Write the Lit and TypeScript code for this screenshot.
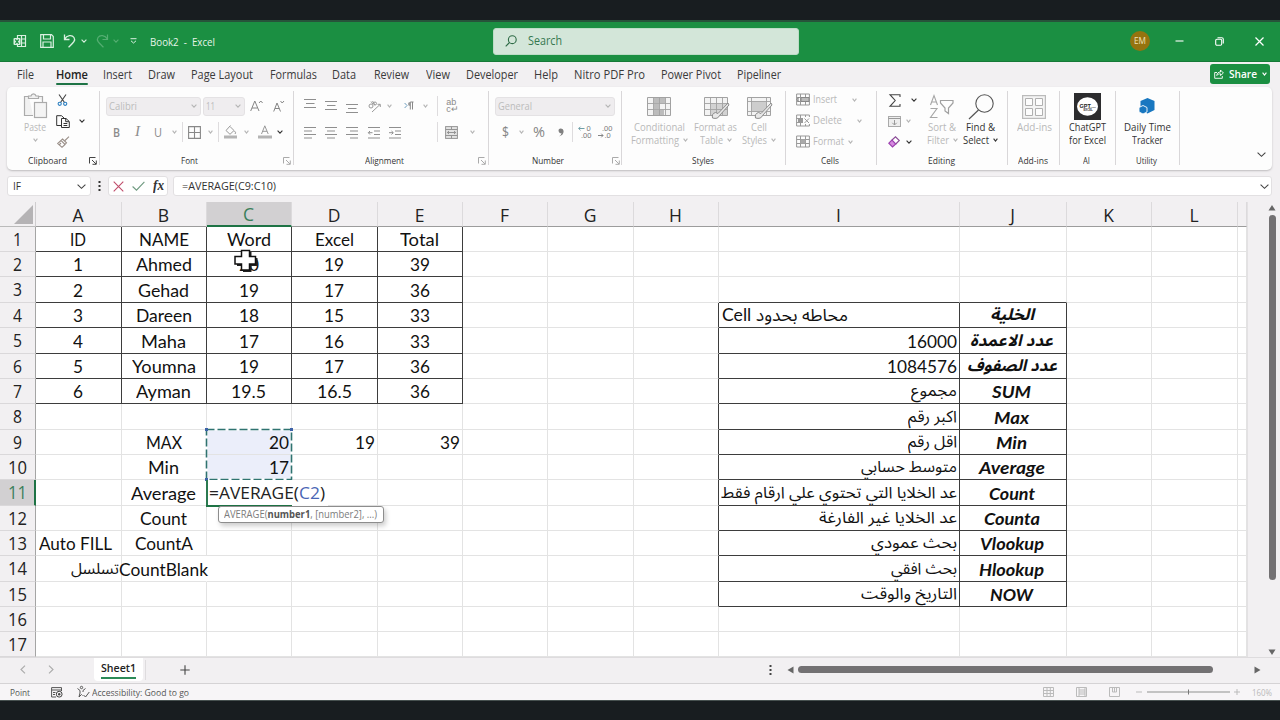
import { LitElement, html, css, svg, nothing } from "lit";
import { customElement, property } from "lit/decorators.js";
import { classMap } from "lit/directives/class-map.js";
import { styleMap } from "lit/directives/style-map.js";

/** A single line of text condensed or expanded to a given width. */
@customElement("fit-text")
class FitText extends LitElement {
  @property({ type: Number }) w = 0;
  static styles = css`
    :host { display: inline-block; white-space: pre; flex: none; overflow: visible; }
    span { display: inline-block; transform-origin: 0 50%; }
  `;
  render() {
    return html`<span><slot></slot></span>`;
  }
  updated() {
    const s = this.renderRoot.querySelector("span") as HTMLElement;
    if (!this.w) return;
    this.style.width = this.w + "px";
    s.style.transform = "none";
    const n = s.getBoundingClientRect().width;
    if (n > 0) s.style.transform = `scaleX(${this.w / n})`;
  }
}

const t = (text: string, w: number, cls = "") => html`<fit-text class=${cls} .w=${w}>${text}</fit-text>`;
const ic = (w: number, h: number, body: unknown) =>
  html`<svg class="ic" width=${w} height=${h} viewBox="0 0 ${w} ${h}" fill="none">${body}</svg>`;
const chev = (c = "#444", w = 6) =>
  ic(w, 4, svg`<path d="M.6 .6 L${w / 2} 3.1 L${w - 0.6} .6" stroke=${c} stroke-width="1.1"/>`);
const bigChev = () => ic(9, 5, svg`<path d="M.6 .6L4.500 4.300L8.400 .6" stroke="#444" stroke-width="1.100"/>`);

type Item = [number, number, unknown];
/** Horizontal run of items; each entry is [left, width, content]. */
const strip = (cls: string, start: number, items: Item[]) => {
  let cur = start;
  return html`<div class="strip ${cls}">
    ${items.map(([x, w, c]) => {
      const m = x - cur;
      cur = x + w;
      return html`<div class="it" style=${styleMap({ marginLeft: m + "px", width: w + "px" })}>${c}</div>`;
    })}
  </div>`;
};

const lines = (w: number, rows: [number, number, number][]) =>
  ic(w, 13, rows.map(([y, a, b]) => svg`<path d="M${a} ${y}H${b}" stroke="#8f8f8f"/>`));

const launcher = (c: string) =>
  ic(8, 8, svg`<path d="M.5 6.5V.5H6.5M3 3L7 7M7.3 3.5V7.3H3.5" stroke=${c}/>`);

const gridIcon = (fills: unknown, brush = false) =>
  ic(26, 24, svg`<path d="M1.500 2.500H24.500V20.500H1.500Z" fill="#f3f3f3" stroke="#a2a2a2"/>${fills}
   <path d="M1.500 8.500H24.500M1.500 14.500H24.500M7.500 2.500V20.500M13.500 2.500V20.500M19.500 2.500V20.500" stroke="#a2a2a2" stroke-width=".9"/>
   ${brush ? svg`<path d="M25 8L15 18.500L12.500 17.500Q8.500 18.500 9.500 23Q15 24.500 16.500 20.500L26 10Z" fill="#e8e8e8" stroke="#8c8c8c"/>` : nothing}`);

const COLS: [string, number][] = [
  ["A", 86], ["B", 85], ["C", 85], ["D", 86], ["E", 85], ["F", 85], ["G", 86],
  ["H", 85], ["I", 241], ["J", 107], ["K", 85], ["L", 86], ["", 9],
];
const ROWS = [25, 25, 26, 25, 26, 25, 25, 26, 25, 25, 26, 25, 25, 26, 25, 25, 25];

/** text, rendered width, alignment */
type Cell = [string, number, string];
const CELLS: Record<string, Cell> = {};
const put = (ref: string, text: string, w: number, al = "c") => (CELLS[ref] = [text, w, al]);
const heads: [string, number][] = [["ID", 16], ["NAME", 50], ["Word", 44], ["Excel", 39], ["Total", 39]];
heads.forEach(([s, w], i) => put("ABCDE"[i] + "1", s, w));
const people: [string, number, string, string, string][] = [
  ["Ahmed", 56, "20", "19", "39"], ["Gehad", 51, "19", "17", "36"], ["Dareen", 56, "18", "15", "33"],
  ["Maha", 45, "17", "16", "33"], ["Youmna", 64, "19", "17", "36"], ["Ayman", 55, "19.5", "16.5", "36"],
];
people.forEach(([n, w, a, b, c], i) => {
  const r = i + 2;
  put("A" + r, String(i + 1), 10);
  put("B" + r, n, w);
  put("C" + r, a, a.length > 2 ? 35 : 20);
  put("D" + r, b, b.length > 2 ? 35 : 20);
  put("E" + r, c, 20);
});
put("B9", "MAX", 36); put("B10", "Min", 31); put("B11", "Average", 65); put("B12", "Count", 47);
put("B13", "CountA", 58); put("B14", "CountBlank", 89);
put("C9", "20", 20, "r"); put("D9", "19", 20, "r"); put("E9", "39", 20, "r"); put("C10", "17", 20, "r");
put("A13", "Auto FILL", 73, "l"); put("A14", "تسلسل", 48, "r ar");
put("I4", "Cell محاطه بحدود", 126, "l mix");
put("I5", "16000", 50, "r"); put("I6", "1084576", 70, "r");
const arab: [string, number][] = [
  ["مجموع", 46], ["اكبر رقم", 49], ["اقل رقم", 49], ["متوسط حسابي", 96], ["عد الخلايا التي تحتوي علي ارقام فقط", 236],
  ["عد الخلايا غير الفارغة", 138], ["بحث عمودي", 86], ["بحث افقي", 66], ["التاريخ والوقت", 96],
];
arab.forEach(([s, w], i) => put("I" + (7 + i), s, w, "r ar"));
const names: [string, number, string][] = [
  ["الخلية", 44, "ar"], ["عدد الاعمدة", 83, "ar"], ["عدد الصفوف", 90, "ar"], ["SUM", 39, ""], ["Max", 35, ""], ["Min", 31, ""],
  ["Average", 66, ""], ["Count", 46, ""], ["Counta", 56, ""], ["Vlookup", 64, ""], ["Hlookup", 65, ""], ["NOW", 43, ""],
];
names.forEach(([s, w, k], i) => put("J" + (4 + i), s, w, "c bi " + k));

const inBox = (c: number, r: number) =>
  (c >= 0 && c <= 4 && r >= 0 && r <= 6) || (c >= 8 && c <= 9 && r >= 3 && r <= 14);

@customElement("app-root")
class AppRoot extends LitElement {
  static styles = css`
    :host { display: flex; flex-direction: column; width: 1280px; height: 720px; overflow: hidden; background: #f2f0f2;
      font-family: "Open Sans", "Noto Sans", sans-serif; font-size: 12px; color: #333; line-height: 1; }
    * { box-sizing: border-box; }
    .ic { display: block; flex: none; overflow: visible; }
    .ic text { font-family: "Liberation Sans", sans-serif; }
    .strip { display: flex; align-items: center; flex: none; }
    .it { display: flex; align-items: center; justify-content: center; flex: none; }
    .dark { height: 22px; background: #181d20; border-bottom: 2px solid #27533a; flex: none; }
    .title { height: 40px; background: #1b8f42; color: #e6f4ea; border-bottom: 1px solid #167a38; padding-bottom: 1px; }
    .ttl { font-size: 11px; }
    .search { display: flex; align-items: center; width: 306px; height: 27px; background: #d3e6d9; border: 1px solid #bcdcc6;
      border-radius: 3px; padding-left: 11px; gap: 11px; color: #35784f; font-size: 12px; }
    .em { width: 20px; height: 20px; border-radius: 50%; background: #95730f; color: #f0e2b6; font-size: 9.5px;
      display: flex; align-items: center; justify-content: center; }
    .tabs { height: 25px; align-items: flex-start; color: #3a3a3a; }
    .tab { display: flex; flex-direction: column; gap: 2px; padding-top: 7px; }
    .tab.on { font-weight: 600; color: #222; }
    .tab i { display: block; height: 2px; background: #1e7345; border-radius: 1px; }
    .share { display: flex; align-items: center; justify-content: center; gap: 5px; width: 60px; height: 20px; margin-top: 2px; padding-bottom: 1px;
      background: #1b8f42; border-radius: 3px; color: #fff; font-weight: 600; font-size: 11px; }
    .ribbon { display: flex; height: 83px; margin: 0 8px 0 7px; background: #fdfdfd; border-radius: 5px;
      box-shadow: 0 1px 2px #bdbbbd; flex: none; }
    .group { display: flex; flex-direction: column; flex: none; position: relative; padding-bottom: 3px; }
    .group::after { content: ""; position: absolute; right: 0; top: 4px; bottom: 5px; width: 1px; background: #d9d7d9; }
    .body { display: flex; height: 66px; flex: none; }
    .cap { height: 16px; font-size: 9.7px; color: #333; }
    .rows2 { display: flex; flex-direction: column; padding-top: 6px; }
    .rows2 .strip { height: 26px; }
    .rows3 { display: flex; flex-direction: column; padding-top: 2px; }
    .rows3 .strip { height: 21px; }
    .big { display: flex; flex-direction: column; align-items: center; flex: none; font-size: 10.3px; color: #333; padding-bottom: 1px; }
    .big .pic { height: 28px; display: flex; align-items: center; justify-content: center; }
    .big .l { height: 13px; display: flex; align-items: center; gap: 4px; }
    .big.dis, .dis { color: #b9b9b9; }
    .combo { display: flex; align-items: center; justify-content: space-between; height: 19px; width: 100%; background: #efedef;
      border: 1px solid #e4e2e4; border-radius: 3px; padding: 0 3px 0 2px; color: #bcbcbc; font-size: 10px; }
    .vr { width: 1px; height: 20px; background: #dedcde; }
    .gl { font-size: 13px; color: #8c8c8c; }
    .money { font-size: 14px; color: #858585; }
    .b { font-weight: 600; }
    .i { font-style: italic; font-family: "Liberation Serif", serif; font-size: 14px; }
    .u { text-decoration: underline; text-underline-offset: 2px; }
    .tiny { display: flex; flex-direction: column; font: 9px/7px "Liberation Sans", sans-serif; color: #8a8a8a; }
    .small { font-size: 10.3px; color: #b9b9b9; }
    .fbar { height: 32px; }
    .box { height: 20px; width: 100%; background: #fff; border: 1px solid #e2e0e2; border-radius: 3px; display: flex; align-items: center;
      font-size: 10.5px; color: #333; padding: 0 4px 0 5px; justify-content: space-between; }
    .box.tools { padding: 0 3px 0 4px; }
    .box.inp { padding: 0 2px 0 8px; }
    .fx { font: italic bold 14px "Liberation Serif", serif; color: #333; }
    .exp { padding: 69px 0 0; display: flex; }
    .sheet { display: flex; height: 455px; flex: none; }
    .grid { display: grid; position: relative; width: 1247px; background: #fff; align-content: start; flex: none; overflow: hidden; }
    .h { display: flex; align-items: center; justify-content: center; background: #f2f0f2; font-size: 17.5px; color: #222; }
    .hc { border-right: 1px solid #dcdadc; border-bottom: 1px solid #9c9c9c; padding: 3px 1px 0 0; }
    .hc.on { background: #d2d0d2; color: #3a7f5b; border-bottom: 2px solid #1e7345; }
    .hr { border-right: 1px solid #a5a5a5; border-bottom: 1px solid #dad8da; padding-top: 1px; }
    .hr.on { background: #d2d0d2; color: #3a7f5b; border-right: 2px solid #1e7345; }
    .corner { justify-content: flex-end; align-items: flex-end; padding: 0 2px 2px 0; border-right: 1px solid #cfcdcf; border-bottom: 1px solid #bbb; }
    .c { display: flex; align-items: center; justify-content: center; border-right: 1px solid #e3e3e3; border-bottom: 1px solid #e3e3e3;
      font-family: Lato, sans-serif; font-size: 17.4px; color: #111; min-width: 0; overflow: visible; white-space: nowrap; padding: 2px 1px 0 0; }
    .c.r { justify-content: flex-end; padding-right: 2px; }
    .c.l { justify-content: flex-start; padding-left: 3px; }
    .c.ar { font-family: "Noto Sans Arabic", "Segoe UI", "DejaVu Sans", sans-serif; font-size: 16px; padding-top: 0; }
    .c.mix { font-family: Lato, "Noto Sans Arabic", "DejaVu Sans", sans-serif; padding-top: 0; }
    .c.bi { font-weight: 700; font-style: italic; padding-right: 3px; }
    .c.nr { border-right-color: transparent; }
    .c.kr { border-right-color: #3d3d3d; }
    .c.kb { border-bottom-color: #3d3d3d; }
    .c.sel { background: #ebeefa; }
    .over { position: absolute; }
    .marq { left: 205px; top: 226px; }
    .edit { left: 206px; top: 278px; width: 122px; height: 26px; background: #fff; border-left: 2px solid #2b7a50;
      display: flex; align-items: center; padding: 0 0 2px 1px; color: #222; font: 17px/1 "Open Sans", sans-serif; }
    .edit b { font-weight: 400; color: #4a66b5; }
    .eline { left: 206px; top: 303px; width: 86px; height: 2px; background: #1e7345; }
    .tip { left: 218px; top: 304px; width: 166px; height: 17px; background: #fff; border: 1px solid #8d8d8d; border-radius: 3px;
      box-shadow: 2px 3px 5px #0003; display: flex; align-items: center; padding: 0 0 1px 5px; font-size: 10px; color: #7c7c7c; }
    .tip b { color: #555; }
    .cursor { left: 233px; top: 46px; }
    .vs { flex: 1; display: flex; flex-direction: column; align-items: center; padding: 3px 0 0 16px; border-left: 1px solid #e3e1e3; }
    .vthumb { width: 7px; height: 365px; margin: 3px 0 69px; border-radius: 4px; background: #737173; }
    .foot { height: 26px; border-top: 1px solid #dedcde; padding-bottom: 2px; }
    .stab { width: 49px; height: 23px; background: #fff; border-radius: 0 0 4px 4px; display: flex; flex-direction: column; align-items: center;
      padding-top: 4px; gap: 3px; font-weight: 600; font-size: 11.5px; color: #222; }
    .stab i { width: 35px; height: 2px; background: #2b8a57; }
    .hthumb { height: 7px; width: 100%; border-radius: 4px; background: #737173; }
    .status { height: 17px; border-top: 1px solid #d5d3d5; background: #f7f5f7; font-size: 9px; color: #555; }
    .end { flex: 1; background: #181d20; border-top: 1px solid #46504f; }
  `;

  private head() {
    const w = "#d9f0e0";
    return strip("title", 0, [
      [13, 14, ic(14, 14, svg`<path d="M4.500 4V1.500H12.500V12.500H4.500V11M8.500 1.500V12.500M8.500 5H12.500M8.500 9H12.500" stroke=${w} stroke-width="1.200"/><rect x=".5" y="4" width="7" height="7" rx="1" fill=${w}/><path d="M2.300 5.500L5.700 9.700M5.700 5.500L2.300 9.700" stroke="#1b8f42" stroke-width="1.200"/>`)],
      [40, 14, ic(14, 14, svg`<path d="M.7 .7H11.500L13.300 2.500V13.300H.7ZM3.500 .7V5H10.500V.7M3 13.300V8H11V13.300" stroke=${w} stroke-width="1.200"/>`)],
      [63, 13, ic(13, 14, svg`<path d="M1.500 .5V5.500H6.500M1.500 5.300C4 1 9 .5 11 3.500C13 6.500 10 9 5.500 13.300" stroke=${w} stroke-width="1.300"/>`)],
      [81, 6, chev(w, 6)],
      [96, 13, ic(13, 14, svg`<path d="M11.500 .5V5.500H6.500M11.500 5.300C9 1 4 .5 2 3.500C0 6.500 3 9 7.500 13.300" stroke="#55ae72" stroke-width="1.200"/>`)],
      [113, 6, chev("#55ae72", 6)],
      [130, 7, ic(7, 6, svg`<path d="M.5 .7H6.500M1 2.800L3.500 5L6 2.800" stroke=${w}/>`)],
      [150, 65, t("Book2  -  Excel", 65, "ttl")],
      [493, 306, html`<div class="search">${ic(12, 12, svg`<circle cx="7.300" cy="4.700" r="3.900" stroke="#2d6a45" stroke-width="1.100"/><path d="M4.500 7.500L.7 11.300" stroke="#2d6a45" stroke-width="1.100"/>`)}${t("Search", 34)}</div>`],
      [1130, 20, html`<div class="em">${t("EM", 12)}</div>`],
      [1175, 9, ic(9, 9, svg`<path d="M.5 4H8.500" stroke="#fff" stroke-width="1.100"/>`)],
      [1215, 9, ic(9, 9, svg`<rect x=".7" y="2.200" width="6" height="6" rx="1.200" stroke="#fff" stroke-width="1.100"/><path d="M2.500 .7H6.800Q8.300 .7 8.300 2.200V6.500" stroke="#fff" stroke-width="1.100"/>`)],
      [1255, 9, ic(9, 9, svg`<path d="M.5 .5L8.500 8.500M8.500 .5L.5 8.500" stroke="#fff" stroke-width="1.200"/>`)],
    ]);
  }

  private tabs() {
    const T: [string, number, number][] = [
      ["File", 17, 17], ["Home", 56, 32], ["Insert", 103, 29], ["Draw", 148, 27], ["Page Layout", 191, 62], ["Formulas", 270, 47],
      ["Data", 332, 24], ["Review", 374, 35], ["View", 426, 24], ["Developer", 466, 52], ["Help", 534, 24],
      ["Nitro PDF Pro", 574, 71], ["Power Pivot", 661, 60], ["Pipeliner", 737, 44],
    ];
    return strip("tabs", 0, [
      ...T.map(([s, x, w]): Item => [x, w, html`<div class="tab ${s === "Home" ? "on" : ""}">${t(s, w)}${s === "Home" ? html`<i></i>` : nothing}</div>`]),
      [1210, 60, html`<div class="share">${ic(10, 10, svg`<path d="M3 3.500H.7V9.300H8.300V7M2.800 6.500C3 4 4.500 3 6.500 3V1L9.400 4L6.500 6.500V4.800C5 4.800 3.800 5.200 2.800 6.500Z" stroke="#fff" stroke-width=".9"/>`)}${t("Share", 28)}${chev("#fff", 5)}</div>`],
    ]);
  }

  private group(x0: number, x1: number, body: unknown, cap: [string, number, number], launch = 0, lc = "#aaa") {
    const items: Item[] = [[cap[1], cap[2], t(cap[0], cap[2])]];
    if (launch) items.push([launch, 8, launcher(lc)]);
    return html`<div class="group" style=${styleMap({ width: x1 - x0 + "px" })}>
      <div class="body">${body}</div>${strip("cap", x0, items)}</div>`;
  }

  private big(cls: string, pic: unknown, l1: unknown, l2: unknown) {
    return html`<div class="big ${cls}"><div class="pic">${pic}</div><div class="l">${l1}</div><div class="l">${l2}</div></div>`;
  }

  private ribbon() {
    const d = "#333";
    const lt = "#b5b5b5";
    const clip = strip("", 7, [
      [22, 26, this.big("dis", ic(26, 28, svg`<path d="M7 3.500H2.500V22.500H11M16 3.500H20.500V9M6.500 5.500V3H9Q9.500 .8 11.500 .8Q13.500 .8 14 3H16.500V5.500Z" fill="#f1f1f1" stroke="#ababab" stroke-width="1.200"/><rect x="12.500" y="9.500" width="12" height="15" fill="#f4f4f4" stroke="#ababab" stroke-width="1.200"/>`), t("Paste", 22), chev(lt, 5))],
      [55, 30, html`<div class="rows3">
        ${strip("", 55, [[57, 11, ic(11, 12, svg`<path d="M2 .5L7.500 8.500M9 .5L3.500 8.500" stroke="#444" stroke-width="1.100"/><circle cx="2.700" cy="9.800" r="1.600" stroke="#2b7fc0" stroke-width="1.100"/><circle cx="8.200" cy="9.800" r="1.600" stroke="#2b7fc0" stroke-width="1.100"/>`)]])}
        ${strip("", 55, [[56, 14, ic(14, 13, svg`<path d="M5 10.500H.7V.7H5.500L8 3" stroke=${d}/><path d="M5.500 3.500H10L13.300 6.500V12.500H5.500ZM9.700 3.500V6.700H13M7.500 8.500H11.300M7.500 10.500H11.300" stroke=${d}/>`)], [79, 6, chev(d, 6)]])}
        ${strip("", 55, [[57, 13, ic(13, 12, svg`<path d="M12 .7L8 4.500M5.500 3L9.500 6.800L8 8.500L4 4.500ZM4 4.500L.7 7.500L5 11.300L8 8.500M2.500 8.500L4 7" stroke="#9a8f88" stroke-width="1.100"/>`)]])}
      </div>`],
    ]);
    const font = html`<div class="rows2">
      ${strip("", 100, [
        [106, 95, html`<div class="combo">${t("Calibri", 28)}${chev(lt, 6)}</div>`],
        [203, 42, html`<div class="combo">${t("11", 9)}${chev(lt, 6)}</div>`],
        [250, 13, ic(13, 13, svg`<path d="M.7 11L4.800 1L9 11M2 8H7.500M9 3L10.800 1L12.600 3" stroke="#858585"/>`)],
        [273, 12, ic(12, 13, svg`<path d="M.7 11.500L4 3L7.500 11.500M2 8.500H6.300M7.500 1L9.200 3L11 1" stroke="#858585"/>`)],
      ])}
      ${strip("", 100, [
        [111, 10, t("B", 7, "gl b")], [132, 10, t("I", 5, "gl i")], [153, 10, t("U", 8, "gl u")], [171, 6, chev(lt, 5)],
        [182, 1, html`<div class="vr"></div>`],
        [188, 13, ic(13, 13, svg`<path d="M.6 .6H12.400V12.400H.6ZM6.500 .6V12.400M.6 6.500H12.400" stroke="#888" stroke-width="1.100"/>`)], [207, 6, chev(lt, 5)],
        [218, 1, html`<div class="vr"></div>`],
        [224, 13, ic(13, 14, svg`<path d="M6 1.500L10 5.500L6 9.300L2 5.500L6.500 .5M10.500 6Q12.500 8 11 9" stroke="#999"/><rect x="0" y="10.500" width="13" height="3" fill="#b4b4b4"/>`)], [243, 6, chev(lt, 5)],
        [258, 14, ic(14, 14, svg`<path d="M3.500 9L6.800 .8L10.200 9M4.700 6.300H9" stroke="#999"/><rect x="0" y="10.500" width="14" height="3" fill="#b4b4b4"/>`)], [277, 6, chev(d, 6)],
      ])}</div>`;
    const a3 = (o: number): unknown => lines(13, [[2.5 + o, 0, 12], [6.5 + o, 2, 10.5], [10.5 + o, 0, 12]]);
    const indent = (r: boolean) => ic(13, 13, svg`<path d="M0 1.500H12M6 5H12M6 8.500H12M0 12H12" stroke="#8f8f8f"/><path d=${r ? "M0 6.700H4M2.500 5L4.300 6.700L2.500 8.500" : "M4.500 6.700H.5M2 5L.3 6.700L2 8.500"} stroke="#8f8f8f"/>`);
    const align = html`<div class="rows2">
      ${strip("", 294, [
        [304, 13, a3(-3)], [325, 13, a3(-1)], [346, 13, a3(2)],
        [368, 14, ic(14, 13, svg`<circle cx="3" cy="6" r="2" stroke="#999"/><path d="M5 4L3 1.500M7 5L4.500 1M4 12L12 4.500M9.500 4.300H12.300V7" stroke="#999"/><circle cx="7" cy="3.500" r="1.500" stroke="#999"/>`)], [386, 6, chev(lt, 5)],
        [404, 10, ic(10, 10, svg`<path d="M.6 2L3 4.500L.6 7" stroke="#6f9fc0"/><path d="M6.300 8.500V1H9.500M8.500 1V8.500" stroke="#888"/><path d="M6.300 1Q4 1 4 3Q4 5 6.300 5Z" fill="#999"/>`)], [422, 6, chev(lt, 5)],
        [437, 1, html`<div class="vr"></div>`],
        [446, 13, html`<div class="tiny"><span>ab</span><span>c↵</span></div>`],
      ])}
      ${strip("", 294, [
        [304, 13, lines(13, [[1.5, 0, 12], [5, 0, 8], [8.5, 0, 12], [12, 0, 8]])],
        [325, 13, lines(13, [[1.5, 0, 12], [5, 2, 10], [8.5, 0, 12], [12, 2, 10]])],
        [346, 13, lines(13, [[1.5, 0, 12], [5, 4, 12], [8.5, 0, 12], [12, 4, 12]])],
        [368, 13, indent(false)], [389, 13, indent(true)],
        [437, 1, html`<div class="vr"></div>`],
        [445, 13, ic(13, 13, svg`<rect x=".6" y=".6" width="11.800" height="11.800" fill="#e4e4e4" stroke="#959595"/><path d="M.6 3.500H12.400M.6 9.500H12.400M6.500 .6V3.500M6.500 9.500V12.400M2 6.500H11M4 5L2.300 6.500L4 8M9 5L10.700 6.500L9 8" stroke="#959595"/>`)], [469, 6, chev(lt, 5)],
      ])}</div>`;
    const dec = (l: string, b: string, r: boolean) => ic(14, 14, svg`<text x=${r ? 4 : 8.5} y="6" font-size="7.5" fill="#777">${l}</text><text x=${r ? 6.500 : 3} y="13" font-size="7.5" fill="#777">${b}</text>${r ? svg`<path d="M0 10.500H5M3.300 8.700L5 10.500L3.300 12.300" stroke="#858585"/>` : svg`<path d="M6.500 3.500H.7M2.500 1.700L.7 3.500L2.500 5.300" stroke="#6f9fa8"/>`}`);
    const num = html`<div class="rows2">
      ${strip("", 489, [[495, 120, html`<div class="combo">${t("General", 34)}${chev(lt, 6)}</div>`]])}
      ${strip("", 489, [
        [500, 10, t("$", 7, "money")], [518, 6, chev(lt, 5)], [532, 14, t("%", 12, "money")],
        [557, 8, ic(6, 9, svg`<path d="M3 .5A2.300 2.300 0 1 0 3.500 5Q3.300 7 1 8.500Q5.800 7 5.600 3Q5.400 .6 3 .5Z" fill="#808080"/>`)],
        [572, 1, html`<div class="vr"></div>`], [578, 14, dec("0", ".00", false)], [598, 14, dec(".00", ".0", true)],
      ])}</div>`;
    const fill = svg`<path d="M8 3H19V8H8ZM8 9H13V14H8ZM8 15H18V20H8Z" fill="#bcbcbc"/>`;
    const styles = strip("", 622, [
      [631, 56, this.big("dis", gridIcon(fill), t("Conditional", 51), html`${t("Formatting", 48)}${chev(lt, 5)}`)],
      [694, 43, this.big("dis", gridIcon(svg`<path d="M8 9H24V20H8Z" fill="#d2d2d2"/>`, true), t("Format as", 43), html`${t("Table", 23)}${chev(lt, 5)}`)],
      [742, 34, this.big("dis", ic(26, 24, svg`<path d="M1.500 2.500H24.500V20.500H1.500Z" fill="#f3f3f3" stroke="#a2a2a2"/><path d="M5.500 6.500H20.500V16.500H5.500Z" fill="#cdcdcd"/><path d="M1.500 6.500H24.500M1.500 16.500H24.500M5.500 2.500V20.500M20.500 2.500V20.500" stroke="#a2a2a2" stroke-width=".9"/><path d="M25 8L15 18.500L12.500 17.500Q8.500 18.500 9.500 23Q15 24.500 16.500 20.500L26 10Z" fill="#e8e8e8" stroke="#8c8c8c"/>`), t("Cell", 16), html`${t("Styles", 25)}${chev(lt, 5)}`)],
    ]);
    const cellIc = (k: number) => ic(14, 13, svg`<path d="M.6 1H13.400V12H.6ZM.6 4.500H13.400M.6 8.500H13.400M4.500 1V12M9.500 1V12" stroke="#999"/>${k === 0 ? svg`<path d="M5 4.500H13V8.500H5ZM3 4L.8 6.500L3 9" fill="#bbb" stroke="#888"/>` : k === 1 ? svg`<path d="M2 4.500H7V9H2Z" fill="#999"/><path d="M7 3H14V10H7Z" fill="#fdfdfd"/><path d="M8.500 4.500L13 9M13 4.500L8.500 9" stroke="#999"/>` : svg`<path d="M4.500 4.500H9.500V8.500H4.500Z" fill="#aaa"/>`}`);
    const cells = html`<div class="rows3">
      ${strip("", 786, [[796, 14, cellIc(0)], [813, 24, t("Insert", 24, "small")], [851, 6, chev(lt, 5)]])}
      ${strip("", 786, [[796, 14, cellIc(1)], [813, 29, t("Delete", 29, "small")], [856, 6, chev(lt, 5)]])}
      ${strip("", 786, [[796, 14, cellIc(2)], [813, 31, t("Format", 31, "small")], [847, 6, chev(lt, 5)]])}
    </div>`;
    const edit = strip("", 877, [
      [887, 30, html`<div class="rows3">
        ${strip("", 887, [[888, 12, ic(12, 13, svg`<path d="M11 3V.7H1L6.200 6.500L1 12.300H11V10" stroke="#444" stroke-width="1.100"/>`)], [910, 6, chev(d, 6)]])}
        ${strip("", 887, [[887, 13, ic(13, 11, svg`<rect x=".5" y=".5" width="12" height="10" fill="#eee" stroke="#aaa"/><path d="M.5 2.500H12.500M6.500 4V9M4.300 6.800L6.500 9L8.700 6.800" stroke="#999"/>`)], [905, 6, chev(lt, 5)]])}
        ${strip("", 887, [[887, 12, ic(12, 12, svg`<path d="M4 4L7.500 .8L11.300 4.500L7.800 8" stroke="#8a4a96" stroke-width="1.100"/><path d="M4 4L.8 7.200L4.500 11L7.800 8Z" fill="#d68ae0" stroke="#9a3fae" stroke-width="1.100"/>`)], [905, 6, chev(d, 6)]])}
      </div>`],
      [926, 32, this.big("dis", ic(26, 26, svg`<path d="M1.500 11L5 1.500L8.500 11M2.700 8H7.300M1.500 14.500H8L1.500 23.500H8.500" stroke="#a6a6a6" stroke-width="1.100"/><path d="M11.500 6.500H24V9L19.500 14V19.500L16 17V14L11.500 9Z" stroke="#a0a0a0" stroke-width="1.200"/>`), t("Sort &", 28), html`${t("Filter", 22)}${chev(lt, 5)}`)],
      [963, 35, this.big("", ic(26, 26, svg`<circle cx="16.500" cy="9.500" r="8.700" stroke="#555" stroke-width="1.100"/><path d="M10.500 16L1 25" stroke="#555" stroke-width="1.200"/>`), t("Find &", 29), html`${t("Select", 26)}${chev(d, 5)}`)],
    ]);
    const addins = strip("", 1008, [[1016, 36, this.big("dis", ic(24, 24, svg`<rect x=".6" y=".6" width="22.800" height="22.800" stroke="#bbb" stroke-width="1.200" fill="#f4f4f4"/><path d="M3.500 3.500H10.500V10.500H3.500ZM13.500 3.500H20.500V10.500H13.500ZM3.500 13.500H10.500V20.500H3.500ZM13.500 13.500H20.500V20.500H13.500Z" stroke="#b0b0b0" fill="#fdfdfd"/>`), t("Add-ins", 35), nothing)]]);
    const ai = strip("", 1060, [[1068, 38, this.big("", ic(27, 27, svg`<rect width="27" height="27" fill="#2c2c2e"/><ellipse cx="13.500" cy="13.500" rx="10.500" ry="9.300" fill="#fff"/><text x="5.500" y="14.500" font-size="5.500" font-weight="700" fill="#222">GPT</text><text x="16.500" y="14.500" font-size="2.500" fill="#222">FOR</text><text x="9.500" y="18" font-size="2.800" font-weight="700" fill="#333">EXCEL</text>`), t("ChatGPT", 37), t("for Excel", 37))]]);
    const util = strip("", 1116, [[1123, 48, this.big("", ic(18, 18, svg`<path d="M9.500 0L16.500 3V12L9.500 15.500L2.500 12V3Z" fill="#1877c0"/><path d="M5 7.500L9 9.500V14L5 16L1 14V9.500Z" fill="#1877c0" stroke="#fdfdfd" stroke-width=".9"/>`), t("Daily Time", 47), t("Tracker", 31))]]);
    return html`<div class="ribbon">
      ${this.group(7, 100, clip, ["Clipboard", 28, 39], 89, "#444")}
      ${this.group(100, 294, font, ["Font", 181, 17], 283)}
      ${this.group(294, 489, align, ["Alignment", 365, 39], 478)}
      ${this.group(489, 622, num, ["Number", 532, 32], 612)}
      ${this.group(622, 786, styles, ["Styles", 692, 22])}
      ${this.group(786, 877, cells, ["Cells", 821, 18])}
      ${this.group(877, 1008, edit, ["Editing", 928, 27])}
      ${this.group(1008, 1060, addins, ["Add-ins", 1018, 30])}
      ${this.group(1060, 1116, ai, ["AI", 1083, 7])}
      ${this.group(1116, 1180, util, ["Utility", 1136, 21])}
      <div class="body">${strip("", 1180, [[1257, 9, html`<div class="exp">${bigChev()}</div>`]])}</div>
    </div>`;
  }

  private fbar() {
    return strip("fbar", 0, [
      [7, 84, html`<div class="box">${t("IF", 8)}${bigChev()}</div>`],
      [98, 3, ic(3, 10, svg`<path d="M.5 0H2.500V2H.5ZM.5 4H2.500V6H.5ZM.5 8H2.500V10H.5Z" fill="#333"/>`)],
      [108, 60, html`<div class="box tools">${ic(11, 11, svg`<path d="M.7 .7L10.300 10.300M10.300 .7L.7 10.300" stroke="#c04d6b" stroke-width="1.100"/>`)}${ic(13, 10, svg`<path d="M.6 5.500L4.500 9.200L12.400 .8" stroke="#6f9a80" stroke-width="1.100"/>`)}${t("fx", 11, "fx")}</div>`],
      [173, 1099, html`<div class="box inp">${t("=AVERAGE(C9:C10)", 94)}${bigChev()}</div>`],
    ]);
  }

  private sheet() {
    const cells: unknown[] = [];
    ROWS.forEach((_, r) => {
      cells.push(html`<div class=${classMap({ h: true, hr: true, on: r === 10 })}>${t(String(r + 1), r > 8 ? 19 : 9)}</div>`);
      COLS.forEach(([name], c) => {
        const v = CELLS[name + (r + 1)];
        const cls: Record<string, boolean> = {
          c: true,
          kr: inBox(c, r) || inBox(c + 1, r),
          kb: inBox(c, r) || inBox(c, r + 1),
          sel: c === 2 && (r === 8 || r === 9),
          nr: c === 1 && r === 13,
        };
        if (v) v[2].split(" ").filter((k) => k && k !== "c").forEach((k) => (cls[k] = true));
        cells.push(html`<div class=${classMap(cls)}>${v ? t(v[0], v[1]) : nothing}</div>`);
      });
    });
    const tpl = styleMap({
      gridTemplateColumns: "36px " + COLS.map(([, w]) => w + "px").join(" "),
      gridTemplateRows: "25px " + ROWS.map((h) => h + "px").join(" "),
    });
    return html`<div class="sheet">
      <div class="grid" style=${tpl}>
        <div class="h corner">${ic(20, 19, svg`<path d="M20 0V19H1Z" fill="#b5b3b5"/>`)}</div>
        ${COLS.map(([n]) => html`<div class=${classMap({ h: true, hc: true, on: n === "C" })}>${n ? t(n, 0) : nothing}</div>`)}
        ${cells}
        <div class="over marq">${ic(88, 54, svg`<path d="M1.500 1.500H86.500V51.500H1.500Z" stroke="#fff" stroke-width="2"/><path d="M1.500 1.500H86.500V51.500H1.500Z" stroke="#2f7370" stroke-width="1.600" stroke-dasharray="8 3"/><path d="M0 0H3V3H0ZM85 0H88V3H85ZM0 50H3V53H0Z" fill="#3d62a8"/>`)}</div>
        <div class="over edit"><fit-text .w=${116}>=AVERAGE(<b>C2</b>)</fit-text></div>
        <div class="over eline"></div>
        <div class="over tip"><fit-text .w=${153}>AVERAGE(<b>number1</b>, [number2], ...)</fit-text></div>
        <div class="over cursor">${ic(26, 25, svg`<path d="M10 4H18.500V10H24.500V18H18.500V24H10V18H4V10H10Z" fill="#222"/><path d="M8.500 2.500H16.500V8.500H22.500V16H16.500V22H8.500V16H2V8.500H8.500Z" fill="#fff" stroke="#111" stroke-width="1.500"/>`)}</div>
      </div>
      <div class="vs">
        ${ic(8, 7, svg`<path d="M4 0L7.500 5.500H.5Z" fill="#666"/>`)}<div class="vthumb"></div>
        ${ic(8, 7, svg`<path d="M4 6L7.500 .5H.5Z" fill="#666"/>`)}
      </div>
    </div>`;
  }

  private foot() {
    return strip("foot", 0, [
      [20, 6, ic(6, 9, svg`<path d="M5 .7L1 4.500L5 8.300" stroke="#aaa" stroke-width="1.100"/>`)],
      [48, 6, ic(6, 9, svg`<path d="M1 .7L5 4.500L1 8.300" stroke="#aaa" stroke-width="1.100"/>`)],
      [94, 49, html`<div class="stab">${t("Sheet1", 35)}<i></i></div>`],
      [145, 1, html`<div class="vr"></div>`],
      [180, 10, ic(10, 10, svg`<path d="M5 .3V9.700M.3 5H9.700" stroke="#444" stroke-width="1.100"/>`)],
      [769, 3, ic(3, 10, svg`<path d="M.5 0H2.500V2H.5ZM.5 4H2.500V6H.5ZM.5 8H2.500V10H.5Z" fill="#444"/>`)],
      [787, 7, ic(7, 8, svg`<path d="M.5 4L6.500 .5V7.500Z" fill="#666"/>`)],
      [798, 415, html`<div class="hthumb"></div>`],
      [1254, 7, ic(7, 8, svg`<path d="M6.500 4L.5 .5V7.500Z" fill="#666"/>`)],
    ]);
  }

  private status() {
    const g = "#bbb";
    return strip("status", 0, [
      [10, 20, t("Point", 20)],
      [51, 12, ic(12, 11, svg`<path d="M5 10H.6V.6H10.500V4M.6 3H10.500M2 5.500H4.500M2 7.500H4" stroke="#555"/><circle cx="8.200" cy="7.200" r="2.900" stroke="#444"/><circle cx="8.200" cy="7.200" r="1.200" fill="#444"/>`)],
      [77, 13, ic(13, 12, svg`<circle cx="4.500" cy="1.500" r="1.200" stroke="#555"/><path d="M.5 2.500L3 4.500V7L2 11L4.500 8.500L5.500 9.500M8.500 2.500L6 4.500V6M6.500 9L8.500 11L12.300 6" stroke="#555"/>`)],
      [92, 97, t("Accessibility: Good to go", 97)],
      [1042, 12, ic(11, 10, svg`<path d="M.5 .5H10.500V9.500H.5ZM.5 3.500H10.500M.5 6.500H10.500M4 .5V9.500M7.300 .5V9.500" stroke=${g}/>`)],
      [1075, 12, ic(11, 10, svg`<path d="M.5 .5H10.500V9.500H.5ZM3 .5V9.500M9 .5V9.500M3 3H9M3 5H9M3 7H9" stroke=${g}/>`)],
      [1108, 12, ic(11, 10, svg`<path d="M.5 .5H10.500V9.500H.5ZM3.500 .5V5H7.500V.5M5.500 .5V5" stroke=${g}/>`)],
      [1136, 6, ic(6, 6, svg`<path d="M0 3H6" stroke=${g}/>`)],
      [1147, 83, ic(83, 6, svg`<path d="M0 3H83" stroke="#b2b2b2" stroke-width="1.300"/><path d="M41.500 .5V5.500" stroke="#777"/>`)],
      [1234, 6, ic(6, 6, svg`<path d="M0 3H6M3 0V6" stroke=${g}/>`)],
      [1252, 20, html`<span class="dis">${t("160%", 20)}</span>`],
    ]);
  }

  render() {
    return html`<div class="dark"></div>${this.head()}${this.tabs()}${this.ribbon()}${this.fbar()}${this.sheet()}${this.foot()}${this.status()}
      <div class="end"></div>`;
  }
}
